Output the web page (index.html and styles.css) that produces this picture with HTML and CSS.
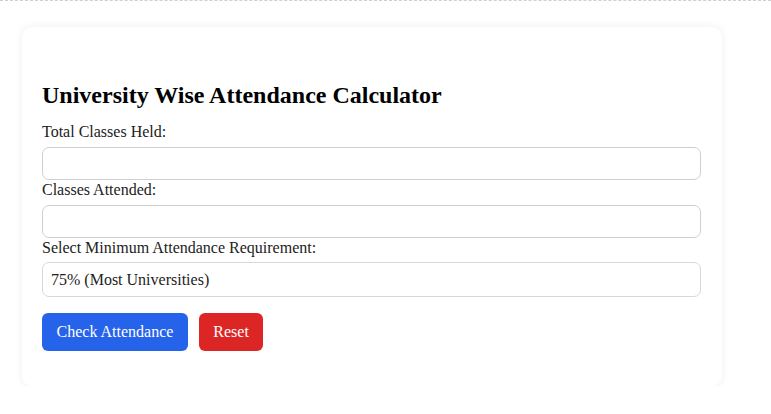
FILE: index.html
```html
<!DOCTYPE html>
<html lang="en">
<head>
    <meta charset="UTF-8">
    <meta name="viewport" content="width=device-width, initial-scale=1.0">
    <title>University Wise Attendance Calculator</title>
    <link rel="stylesheet" href="styles.css">
</head>
<body>
    <div class="container">
        <h2>University Wise Attendance Calculator</h2>
        <label for="total">Total Classes Held:</label>
        <input type="number" id="total">
        <label for="attended">Classes Attended:</label>
        <input type="number" id="attended">
        <label for="requirement">Select Minimum Attendance Requirement:</label>
        <select id="requirement">
            <option value="75">75% (Most Universities)</option>
            <option value="80">80%</option>
            <option value="85">85%</option>
        </select>
        <div class="actions">
            <button class="check">Check Attendance</button>
            <button class="reset">Reset</button>
        </div>
    </div>
</body>
</html>
```

FILE: styles.css
```css
body {
    font-family: "Liberation Serif", "Times New Roman", serif;
    background-color: #ffffff;
    color: #111;
    margin: 0;
    padding: 26px 0 0 22px;
    border-top: 1px dashed #cfcfcf;
}
.container {
    width: 700px;
    box-sizing: border-box;
    background: #fff;
    padding: 34px 21px 35px 20px;
    border-radius: 10px;
    box-shadow: 0 0 8px rgba(0, 0, 0, 0.07);
}
h2 {
    font-size: 24px;
    line-height: 28px;
    margin: 20px 0 14px;
    color: #000;
}
label {
    display: block;
    font-size: 16px;
    line-height: 18px;
    color: #222;
}
input, select {
    display: block;
    width: 100%;
    box-sizing: border-box;
    font-family: inherit;
    font-size: 16px;
    border: 1px solid #cfcfcf;
    border-radius: 7px;
    background: #fff;
    margin: 6px 0 1px;
}
input {
    height: 33px;
    padding: 0 8px;
}
select {
    height: 35px;
    padding: 0 8px;
    color: #222;
    margin-top: 5px;
    border-color: #d8d8d8;
    appearance: none;
}
.actions {
    display: flex;
    gap: 11px;
    margin-top: 16px;
}
button {
    height: 38px;
    padding: 0 14.5px;
    border: none;
    border-radius: 6px;
    color: white;
    font-family: inherit;
    font-size: 16px;
    cursor: pointer;
}
.check {
    background: #2563eb;
}
.reset {
    background: #dc2626;
}
```
